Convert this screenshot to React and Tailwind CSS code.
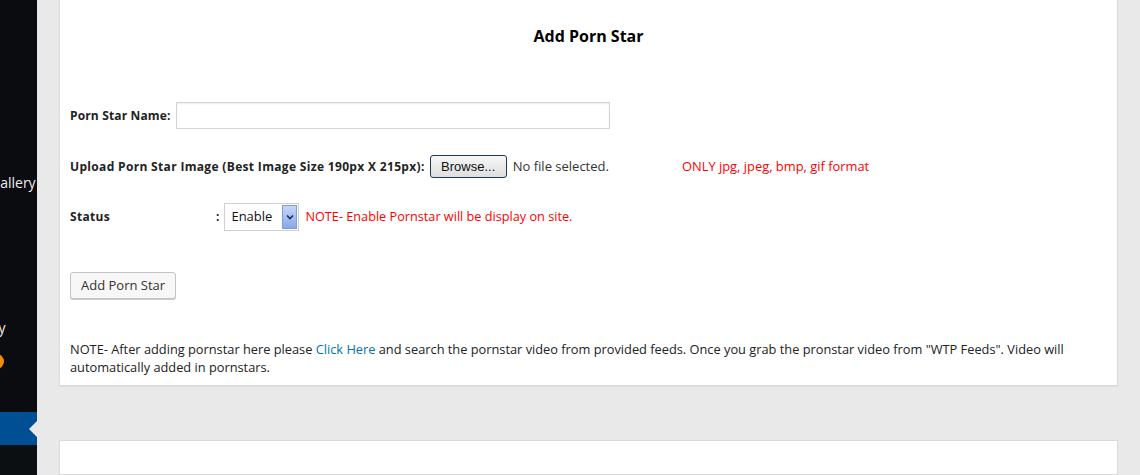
import React from "react";

export default function App() {
  const font = { fontFamily: '"Open Sans", "Segoe UI", Arial, sans-serif' };
  return (
    <div className="flex h-[475px] w-[1140px] overflow-hidden bg-[#e9e9e9] text-[#222]" style={font}>
      {/* sidebar */}
      <div className="relative flex w-[37px] shrink-0 flex-col overflow-hidden bg-[#0a0c0f] text-[14px] text-[#eeeeee]">
        <div className="h-[173px]" />
        <div className="ml-[-10px] h-[20px] whitespace-nowrap leading-[20px]">Gallery</div>
        <div className="h-[125px]" />
        <div className="ml-[-40px] h-[20px] whitespace-nowrap leading-[20px]">Gallery</div>
        <div className="h-[16px]" />
        <div className="ml-[-11px] h-[15px] w-[15px] rounded-full bg-[#f28a0a]" />
        <div className="h-[43px]" />
        <div className="relative h-[33px] w-full bg-[#004e94]">
          <div className="absolute right-0 top-[9px] h-0 w-0 border-y-[8px] border-r-[8px] border-y-transparent border-r-[#e9e9e9]" />
        </div>
        <div className="flex-1 bg-[#0c0f12]" />
      </div>

      {/* main */}
      <div className="flex flex-1 flex-col pl-[22px] pr-[22px]">
        <div className="mt-[-1px] border border-[#dadada] bg-white px-[10px] shadow-[0_1px_1px_rgba(0,0,0,0.04)]">
          <h2 className="pt-[24px] text-center text-[16px] font-bold leading-[24px] text-black">Add Porn Star</h2>

          <div className="mt-[54px] flex items-center text-[12px]">
            <span className="font-bold tracking-[0.15px]">Porn Star Name:</span>
            <input type="text" className="ml-[5px] h-[27px] w-[434px] border border-[#d4d4d4] bg-white shadow-[inset_0_1px_2px_rgba(0,0,0,0.07)] outline-none" />
          </div>

          <div className="mt-[26px] flex items-center text-[12px]">
            <span className="font-bold tracking-[0.33px]">Upload Porn Star Image (Best Image Size 190px X 215px):</span>
            <button className="ml-[5px] h-[23px] w-[77px] rounded-[3px] border border-[#1c3a5c] bg-gradient-to-b from-[#f7f7f7] to-[#dedede] text-[13px] text-[#111]" style={{ fontFamily: '"Liberation Sans", Arial, sans-serif' }}>Browse...</button>
            <span className="ml-[6px] text-[13px] text-[#333]">No file selected.</span>
            <span className="ml-[73px] text-[12.9px] text-[#ff0000]">ONLY jpg, jpeg, bmp, gif format</span>
          </div>

          <div className="mt-[25px] flex items-center text-[12px]">
            <span className="w-[145px] font-bold tracking-[0.3px]">Status</span>
            <span className="ml-[1px] font-bold">:</span>
            <div className="ml-[5px] flex h-[28px] w-[75px] items-center border border-[#cfcfcf] bg-white pl-[6px]">
              <span className="flex-1 text-[13px] text-[#111]">Enable</span>
              <span className="mr-[1px] flex h-[24px] w-[15px] items-center justify-center border border-[#7f9bd6] bg-gradient-to-b from-[#c7d6f6] to-[#8aa7e8]">
                <svg width="8" height="6" viewBox="0 0 8 6"><path d="M1 1.5 L4 4.5 L7 1.5" fill="none" stroke="#1a2f66" strokeWidth="1.6" /></svg>
              </span>
            </div>
            <span className="ml-[6px] text-[12.7px] text-[#ff0000]">NOTE- Enable Pornstar will be display on site.</span>
          </div>

          <div className="mt-[41px]">
            <button className="h-[27px] rounded-[3px] border border-[#c4c4c4] bg-[#f7f7f7] px-[10px] text-[13px] text-[#333] shadow-[0_1px_0_#ccc]">Add Porn Star</button>
          </div>

          <p className="mt-[41px] pb-[9px] text-[12.8px] leading-[18px] text-[#222]">
            NOTE- After adding pornstar here please <span className="text-[#0073aa]">Click Here</span> and search the pornstar video from provided feeds. Once you grab the pronstar video from "WTP Feeds". Video will automatically added in pornstars.
          </p>
        </div>

        <div className="mt-[54px] h-[60px] border border-[#dadada] bg-white" />
      </div>
    </div>
  );
}
